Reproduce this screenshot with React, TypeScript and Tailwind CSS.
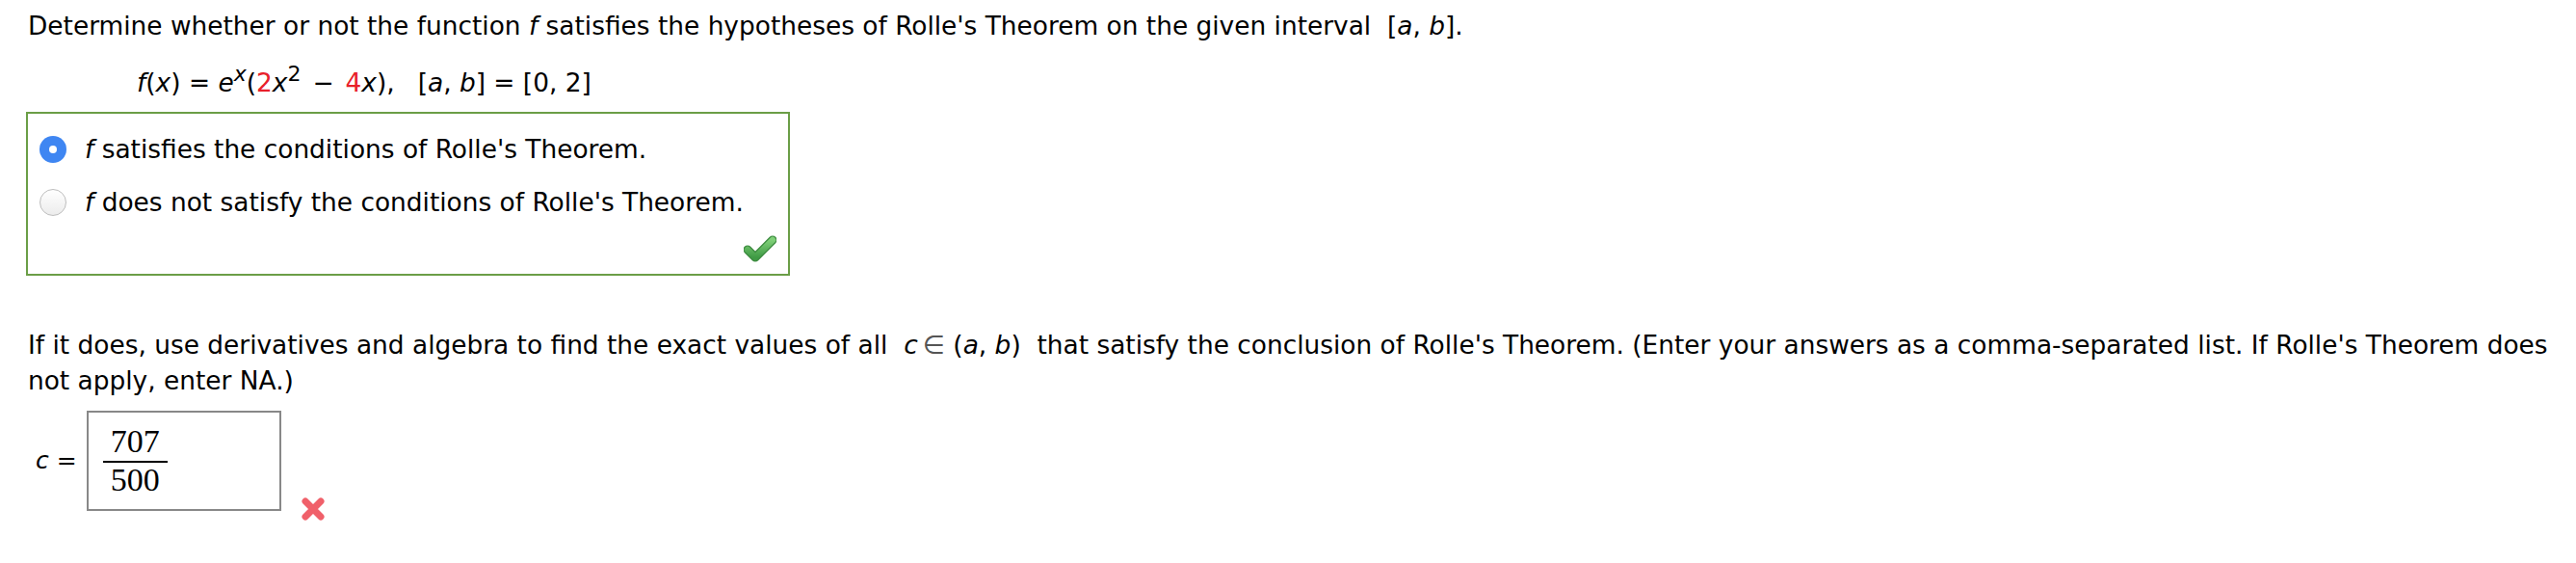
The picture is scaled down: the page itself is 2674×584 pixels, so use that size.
import React from 'react';

const font = { fontFamily: '"DejaVu Sans", Verdana, sans-serif' };

const RadioOn: React.FC = () => (
  <span className="inline-flex h-[28px] w-[28px] shrink-0 items-center justify-center rounded-full bg-[#3f86f2]">
    <span className="h-[8px] w-[8px] rounded-full bg-white" />
  </span>
);

const RadioOff: React.FC = () => (
  <span className="inline-block h-[28px] w-[28px] shrink-0 rounded-full border border-[#bdbdbd] bg-gradient-to-b from-white to-[#ececec]" />
);

const Check: React.FC = () => (
  <svg width="34" height="28" viewBox="0 0 34 28">
    <defs>
      <linearGradient id="g" x1="0" y1="0" x2="0" y2="1">
        <stop offset="0" stopColor="#7fcf78" />
        <stop offset="1" stopColor="#3f9a44" />
      </linearGradient>
    </defs>
    <path d="M4 15 L12 23 L30 5" fill="none" stroke="#3b8a3e" strokeWidth="9" strokeLinecap="round" strokeLinejoin="round" />
    <path d="M4 15 L12 23 L30 5" fill="none" stroke="url(#g)" strokeWidth="6.5" strokeLinecap="round" strokeLinejoin="round" />
  </svg>
);

const Cross: React.FC = () => (
  <svg width="28" height="28" viewBox="0 0 28 28">
    <path d="M6 6 L22 22 M22 6 L6 22" fill="none" stroke="#f0606a" strokeWidth="7" strokeLinecap="round" />
  </svg>
);

const App: React.FC = () => {
  return (
    <div className="min-h-screen bg-white pl-[29px] pt-[8px] text-[26.4px] leading-[38px] text-black" style={font}>
      <p>
        Determine whether or not the function <i>f</i> satisfies the hypotheses of Rolle's Theorem on the given interval&nbsp;&nbsp;[<i>a</i>, <i>b</i>].
      </p>

      <p className="mt-[21px] pl-[113px]">
        <i>f</i>(<i>x</i>) = <i>e</i>
        <span className="relative top-[-11px] text-[22px] leading-none">
          <i>x</i>
        </span>
        (<span className="text-[#e8202a]">2</span>
        <i>x</i>
        <span className="relative top-[-11px] text-[22px] leading-none">2</span>
        <span className="mx-[12px]">&minus;</span>
        <span className="text-[#e8202a]">4</span>
        <i>x</i>),<span className="ml-[24px]">[</span><i>a</i>, <i>b</i>] = [0, 2]
      </p>

      <div className="mt-[11px] ml-[-2px] w-[793px] border-2 border-[#6b9e47] pt-[9px]">
        <div className="flex h-[55px] items-center gap-[19px] pl-[12px]">
          <RadioOn />
          <span>
            <i>f</i> satisfies the conditions of Rolle's Theorem.
          </span>
        </div>
        <div className="flex h-[55px] items-center gap-[19px] pl-[12px]">
          <RadioOff />
          <span>
            <i>f</i> does not satisfy the conditions of Rolle's Theorem.
          </span>
        </div>
        <div className="flex h-[47px] items-start justify-end pr-[12px] pt-[7px]">
          <Check />
        </div>
      </div>

      <p className="mt-[53px] pr-[8px] leading-[37px]">
        If it does, use derivatives and algebra to find the exact values of all&nbsp;&nbsp;<i>c</i>
        <span className="text-[#555]">&thinsp;&isin;</span> (<i>a</i>, <i>b</i>)&nbsp;&nbsp;that satisfy the conclusion of Rolle's Theorem. (Enter your answers as a comma-separated list. If Rolle's Theorem does not apply, enter NA.)
      </p>

      <div className="mt-[13px] flex items-start">
        <div className="flex h-[104px] items-center pl-[8px] pr-[10px] text-[25px]">
          <i>c</i>&nbsp;=
        </div>
        <div className="flex h-[104px] w-[202px] items-center border-2 border-[#888] pl-[15px]">
          <div className="flex flex-col items-center text-[34px] leading-[30px]" style={{ fontFamily: '"Liberation Serif", "Times New Roman", serif' }}>
            <span className="px-[8px] pb-[5px]">707</span>
            <span className="h-[2px] w-full bg-black" />
            <span className="px-[8px] pt-[3px]">500</span>
          </div>
        </div>
        <div className="ml-[19px] self-end mb-[-12px]">
          <Cross />
        </div>
      </div>
    </div>
  );
};

export default App;
